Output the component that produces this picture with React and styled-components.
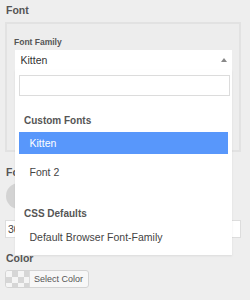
import React from "react";
import styled, { createGlobalStyle } from "styled-components";

const Global = createGlobalStyle`
  html, body { margin: 0; padding: 0; background: #eeeeee; }
  body { font-family: "Liberation Sans", Arial, sans-serif; }
  * { box-sizing: border-box; }
`;

const Page = styled.div`
  width: 250px;
  height: 300px;
  padding: 3px 9px 0 5px;
  overflow: hidden;
`;

const Heading = styled.div`
  font-size: 10.5px;
  line-height: 14px;
  font-weight: bold;
  color: #555;
  margin-left: 1px;
  margin-top: ${(p) => p.$mt || 0}px;
`;

const Panel = styled.div`
  margin-top: 5px;
  border: 2px solid #e2e2e2;
  background: #ededed;
  padding: 12px 7px 80px 8px;
`;

const Label = styled.div`
  font-size: 8.5px;
  line-height: 12px;
  font-weight: bold;
  color: #555;
  margin-left: -1px;
`;

const SelectWrap = styled.div`
  position: relative;
  margin-top: 2px;
`;

const SelectBox = styled.div`
  height: 20px;
  background: #fff;
  display: flex;
  align-items: center;
  justify-content: space-between;
  padding: 0 5px 0 5.5px;
  font-size: 10.5px;
  color: #333;
`;

const Arrow = styled.span`
  width: 0;
  height: 0;
  border-left: 3px solid transparent;
  border-right: 3px solid transparent;
  border-bottom: 4px solid #888;
  margin-top: -1px;
`;

const Dropdown = styled.div`
  position: absolute;
  top: 20px;
  left: 0;
  width: 217px;
  background: #fff;
  box-shadow: 0 1px 2px rgba(0, 0, 0, 0.08);
  padding: 5px 2px 7.5px 4px;
  z-index: 5;
`;

const Search = styled.div`
  height: 21px;
  width: 211px;
  border: 1px solid #dcdcdc;
  background: #fff;
`;

const GroupLabel = styled.div`
  font-size: 10px;
  line-height: 12px;
  font-weight: bold;
  color: #555;
  padding-left: 5px;
  margin-top: ${(p) => p.$mt}px;
`;

const Option = styled.div`
  height: 22px;
  width: 209px;
  display: flex;
  align-items: center;
  padding-left: 10.5px;
  font-size: 10.5px;
  color: ${(p) => (p.$active ? "#fff" : "#444")};
  background: ${(p) => (p.$active ? "#5897fb" : "transparent")};
  margin-top: ${(p) => p.$mt}px;
`;

const Circle = styled.div`
  width: 26px;
  height: 26px;
  border-radius: 50%;
  background: #d3d3d3;
  margin-top: 4px;
  margin-left: 1px;
`;

const Input = styled.div`
  margin-top: 11px;
  height: 18px;
  width: 236px;
  border: 1px solid #dddddd;
  background: #fff;
  font-size: 10.5px;
  color: #444;
  display: flex;
  align-items: center;
  padding-left: 2px;
`;

const ColorButton = styled.div`
  margin-top: 5px;
  height: 18px;
  width: 84px;
  border: 1px solid #d4d4d4;
  border-radius: 3px;
  background: #f7f7f7;
  display: flex;
  align-items: stretch;
  overflow: hidden;
`;

const Swatch = styled.div`
  width: 24px;
  background-color: #f5f5f5;
  background-image:
    linear-gradient(45deg, #d6d6d6 25%, transparent 25%, transparent 75%, #d6d6d6 75%),
    linear-gradient(45deg, #d6d6d6 25%, transparent 25%, transparent 75%, #d6d6d6 75%);
  background-size: 12px 12px;
  background-position: 0 0, 6px 6px;
  border-right: 1px solid #dcdcdc;
`;

const ButtonText = styled.span`
  display: flex;
  align-items: center;
  padding-left: 4px;
  font-size: 9px;
  color: #555;
`;

export default function App() {
  return (
    <>
      <Global />
      <Page>
        <Heading>Font</Heading>
        <Panel>
          <Label>Font Family</Label>
          <SelectWrap>
            <SelectBox>
              <span>Kitten</span>
              <Arrow />
            </SelectBox>
            <Dropdown>
              <Search />
              <GroupLabel $mt={18.5}>Custom Fonts</GroupLabel>
              <Option $active $mt={5.5}>Kitten</Option>
              <Option $mt={7}>Font 2</Option>
              <GroupLabel $mt={25}>CSS Defaults</GroupLabel>
              <Option $mt={5.5}>Default Browser Font-Family</Option>
            </Dropdown>
          </SelectWrap>
        </Panel>
        <Heading $mt={13}>Font Size</Heading>
        <Circle />
        <Input>300</Input>
        <Heading $mt={13}>Color</Heading>
        <ColorButton>
          <Swatch />
          <ButtonText>Select Color</ButtonText>
        </ColorButton>
      </Page>
    </>
  );
}
